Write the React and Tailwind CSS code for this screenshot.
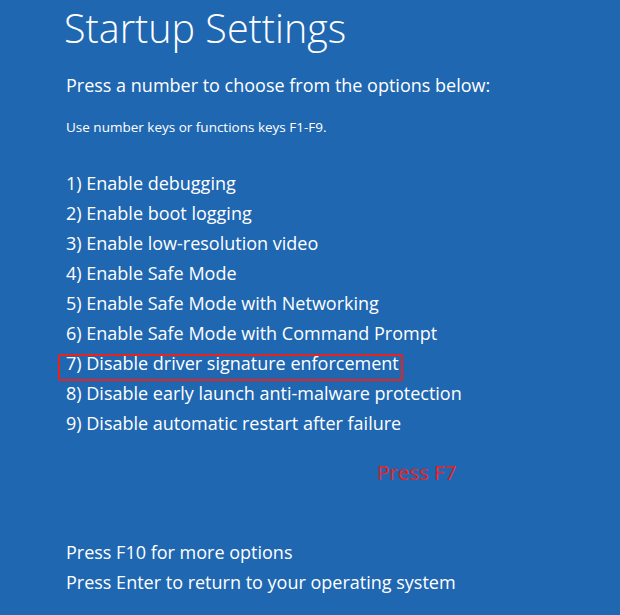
import React from 'react';

const options = [
    'Enable debugging',
    'Enable boot logging',
    'Enable low-resolution video',
    'Enable Safe Mode',
    'Enable Safe Mode with Networking',
    'Enable Safe Mode with Command Prompt',
    'Disable driver signature enforcement',
    'Disable early launch anti-malware protection',
    'Disable automatic restart after failure',
];

const App = () => {
    return (
        <div className="w-[620px] h-[615px] overflow-hidden bg-[#2067b2] text-white font-['Open_Sans',sans-serif]">
            <div className="pl-[64px]">
                {/* Title */}
                <h1 className="pt-[2px] text-[39.5px] leading-[52px] font-light">Startup Settings</h1>

                <p className="mt-[16px] ml-[2px] text-[18px] leading-[30px]">
                    Press a number to choose from the options below:
                </p>
                <p className="mt-[19px] ml-[2px] text-[13.5px] leading-[16px]">
                    Use number keys or functions keys F1-F9.
                </p>

                {/* Options */}
                <ul className="mt-[33px] ml-[2px]">
                    {options.map((opt, i) => (
                        <li key={opt} className="relative text-[18px] leading-[30px]">
                            {i + 1}) {opt}
                            {i === 6 && (
                                <span className="absolute left-[-8px] top-[6px] w-[345px] h-[27px] border-2 border-[#e8231e] rounded-[2px]" />
                            )}
                        </li>
                    ))}
                </ul>

                <p className="mt-[22px] ml-[313px] text-[20.5px] leading-[24px] text-[#f0201c]">Press F7</p>

                {/* Footer */}
                <div className="mt-[53px] ml-[2px] text-[18px] leading-[30px]">
                    <p>Press F10 for more options</p>
                    <p>Press Enter to return to your operating system</p>
                </div>
            </div>
        </div>
    );
};

export default App;
